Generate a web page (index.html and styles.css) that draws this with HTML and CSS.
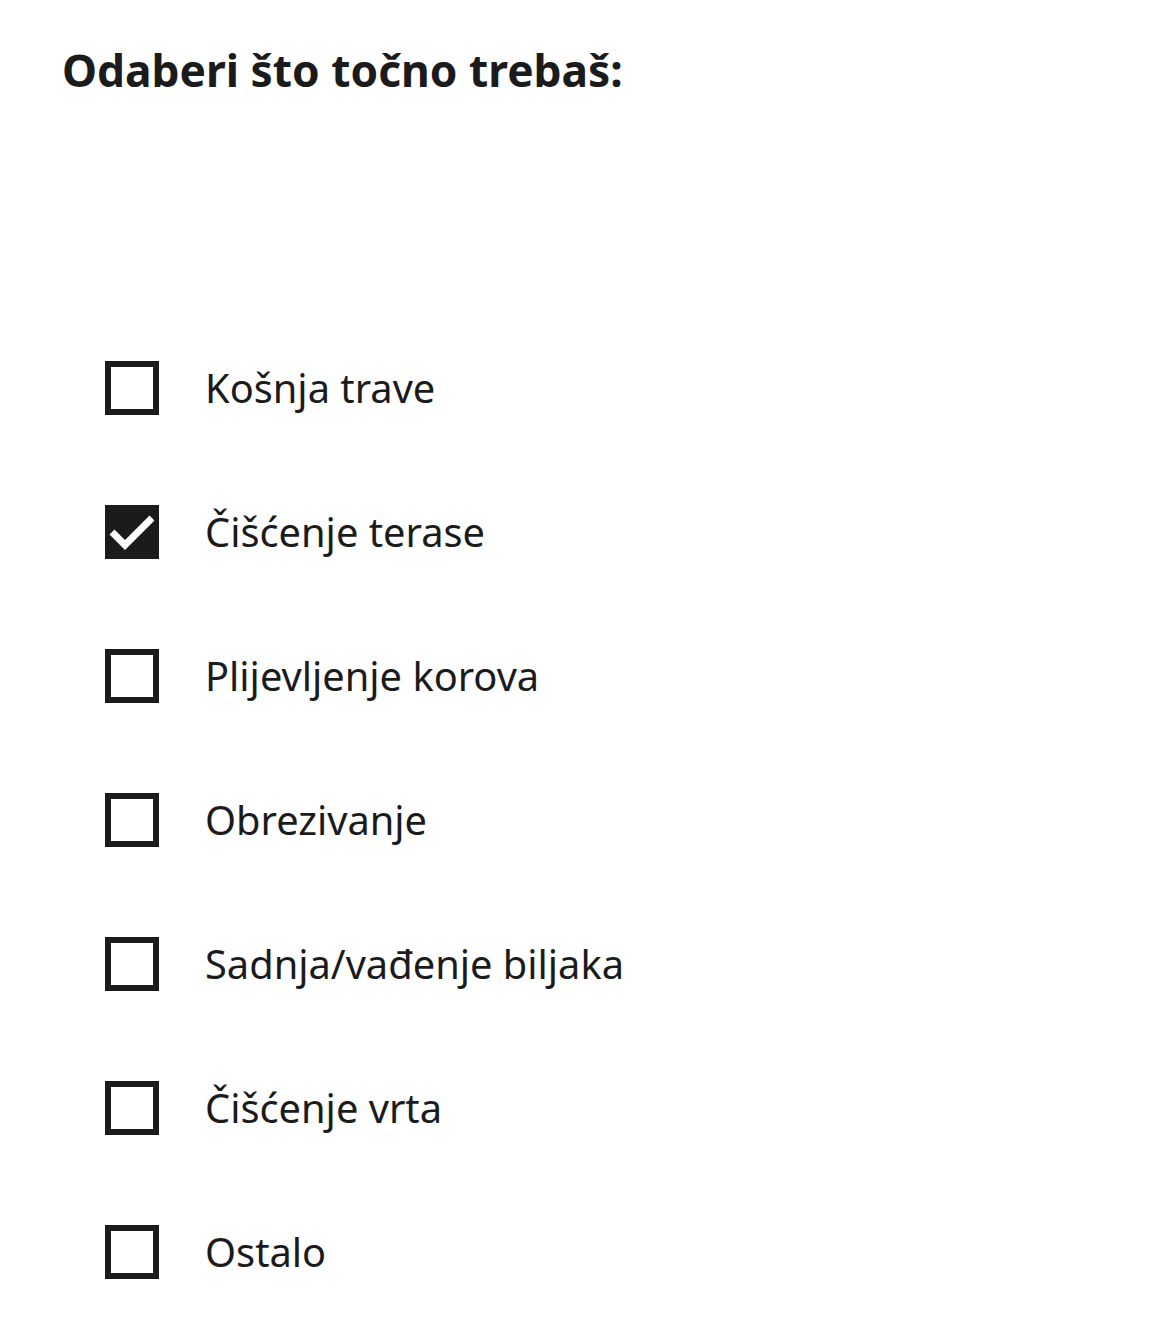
FILE: index.html
```html
<!DOCTYPE html>
<html lang="hr">
<head>
<meta charset="utf-8">
<title>Odaberi</title>
<link rel="stylesheet" href="styles.css">
</head>
<body>
<main class="page">
  <h1 class="title">Odaberi što točno trebaš:</h1>
  <ul class="options">
    <li class="option"><span class="box"></span><span class="label">Košnja trave</span></li>
    <li class="option"><span class="box checked"><svg viewBox="0 0 54 54" class="tick"><path d="M7 27 L20 40 L47 13" fill="none" stroke="#fff" stroke-width="7"/></svg></span><span class="label">Čišćenje terase</span></li>
    <li class="option"><span class="box"></span><span class="label">Plijevljenje korova</span></li>
    <li class="option"><span class="box"></span><span class="label">Obrezivanje</span></li>
    <li class="option"><span class="box"></span><span class="label">Sadnja/vađenje biljaka</span></li>
    <li class="option"><span class="box"></span><span class="label">Čišćenje vrta</span></li>
    <li class="option"><span class="box"></span><span class="label">Ostalo</span></li>
  </ul>
</main>
</body>
</html>
```
FILE: styles.css
```css
html, body {
  margin: 0;
  padding: 0;
  background: #ffffff;
}
body {
  font-family: "Noto Sans", "Open Sans", sans-serif;
  color: #1b1b1b;
}
.page {
  padding: 40px 0 0 62px;
}
.title {
  margin: 0;
  font-size: 44.3px;
  font-weight: 700;
  line-height: 60px;
  letter-spacing: 0;
}
.options {
  list-style: none;
  margin: 0;
  padding: 0 0 0 43px;
  display: flex;
  flex-direction: column;
  gap: 90px;
  margin-top: 261px;
}
.option {
  display: flex;
  align-items: center;
  gap: 46px;
  height: 54px;
}
.box {
  box-sizing: border-box;
  width: 54px;
  height: 54px;
  border: 6px solid #1b1b1b;
  flex: none;
  display: flex;
  align-items: center;
  justify-content: center;
}
.box.checked {
  background: #1b1b1b;
  border: none;
}
.tick {
  width: 54px;
  height: 54px;
  display: block;
}
.label {
  font-size: 39.8px;
  line-height: 54px;
  font-weight: 400;
}
```
